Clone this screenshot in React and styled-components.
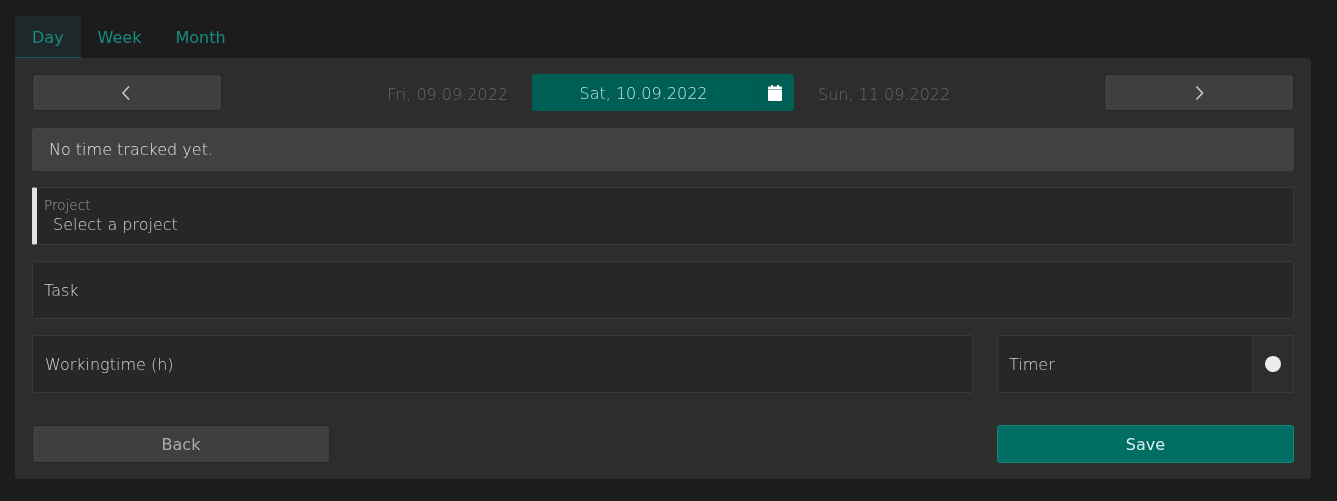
import React from "react";
import styled, { createGlobalStyle } from "styled-components";

const GlobalStyle = createGlobalStyle`
  html, body {
    margin: 0;
    background: #1c1c1c;
    font-family: "DejaVu Sans", sans-serif;
    font-size: 16px;
  }
`;

const Page = styled.div`
  padding: 16px 26px 22px 15px;
  width: 1337px;
  height: 501px;
  box-sizing: border-box;
  will-change: transform;
`;

const Tabs = styled.div`
  display: flex;
  height: 42px;
`;

const Tab = styled.div`
  padding: 0 17px;
  line-height: 43px;
  color: #148c80;
  background: ${(p) => (p.$active ? "#20272a" : "transparent")};
  border-bottom: ${(p) => (p.$active ? "1px solid #0c5f56" : "none")};
  box-sizing: border-box;
`;

const Panel = styled.div`
  background: #2d2d2d;
  border-radius: 0 3px 3px 3px;
  padding: 16px 17px;
  height: 421px;
  box-sizing: border-box;
  display: flex;
  flex-direction: column;
`;

const DateRow = styled.div`
  display: flex;
  align-items: center;
  justify-content: space-between;
  height: 37px;
`;

const NavButton = styled.div`
  width: 190px;
  height: 37px;
  box-sizing: border-box;
  padding-top: 1px;
  background: #3f3f3f;
  border: 1px solid #262626;
  border-radius: 3px;
  display: flex;
  align-items: center;
  justify-content: center;
`;

const DateGroup = styled.div`
  display: flex;
  align-items: center;
  gap: 24px;
`;

const DateText = styled.div`
  color: #686868;
  font-weight: 300;
  width: 132px;
  white-space: nowrap;
  padding-top: 3px;
  text-align: ${(p) => p.$align};
`;

const DatePicker = styled.div`
  display: flex;
  width: 262px;
  height: 37px;
  background: #005f55;
  border-radius: 3px;
`;

const DateValue = styled.div`
  flex: 1;
  padding-left: 1px;
  text-align: center;
  line-height: 39px;
  font-weight: 300;
  color: #c4e4df;
  border-right: 1px solid #0a5249;
`;

const CalendarBox = styled.div`
  width: 39px;
  display: flex;
  align-items: center;
  justify-content: center;
`;

const Notice = styled.div`
  margin-top: 17px;
  height: 43px;
  line-height: 43px;
  background: #414141;
  border-radius: 3px;
  padding: 0 17px;
  font-weight: 300;
  color: #e2e2e2;
`;

const Field = styled.div`
  margin-top: 16px;
  height: 58px;
  box-sizing: border-box;
  background: #272727;
  border: 1px solid #3a3a3a;
  border-radius: 2px;
  font-weight: 300;
  color: #d4d4d4;
  display: flex;
  flex-direction: column;
  justify-content: center;
  flex: ${(p) => (p.$grow ? 1 : "none")};
  border-left: ${(p) => (p.$marked ? "5px solid #e4e4e4" : "1px solid #3a3a3a")};
  padding: 0 0 0 ${(p) => p.$inset || 11}px;
`;

const FieldLabel = styled.div`
  font-size: 13.6px;
  line-height: 16px;
  color: #a0a0a0;
`;

const SelectValue = styled.div`
  padding: 1px 0 0 9px;
  line-height: 22px;
  color: #d4d4d4;
`;

const WorkRow = styled.div`
  display: flex;
  gap: 24px;
`;

const TimerBox = styled.div`
  margin-top: 16px;
  width: 297px;
  height: 58px;
  box-sizing: border-box;
  border: 1px solid #3a3a3a;
  border-radius: 2px;
  display: flex;
`;

const TimerLabel = styled.div`
  flex: 1;
  background: #272727;
  font-weight: 300;
  color: #d4d4d4;
  line-height: 57px;
  padding-left: 11px;
  border-right: 1px solid #3a3a3a;
`;

const TimerToggle = styled.div`
  width: 40px;
  display: flex;
  align-items: center;
  justify-content: center;
`;

const Dot = styled.div`
  width: 16px;
  height: 16px;
  border-radius: 50%;
  background: #ececec;
`;

const Actions = styled.div`
  margin-top: 32px;
  display: flex;
  justify-content: space-between;
`;

const ActionButton = styled.div`
  width: ${(p) => (p.$primary ? 297 : 298)}px;
  height: 38px;
  box-sizing: border-box;
  border-radius: 3px;
  line-height: 37px;
  text-align: center;
  background: ${(p) => (p.$primary ? "#006e62" : "#3f3f3f")};
  border: 1px solid ${(p) => (p.$primary ? "#12897b" : "#262626")};
  color: ${(p) => (p.$primary ? "#d7efeb" : "#acacac")};
`;

const Chevron = ({ points }) => (
  <svg width="12" height="16" viewBox="0 0 12 16" fill="none">
    <polyline points={points} stroke="#c8c8c8" strokeWidth="1.6" />
  </svg>
);

const CalendarIcon = () => (
  <svg width="14" height="16" viewBox="0 0 14 16" fill="#fff">
    <rect x="3" y="0" width="2" height="3" />
    <rect x="9" y="0" width="2" height="3" />
    <path d="M1.2 1.6H13a1 1 0 0 1 1 1V4.6H0V2.8a1.2 1.2 0 0 1 1.2-1.2z" />
    <path d="M0 5h14v9.8a1.2 1.2 0 0 1-1.2 1.2H1.2A1.2 1.2 0 0 1 0 14.8z" />
  </svg>
);

export default function App() {
  return (
    <Page>
      <GlobalStyle />
      <Tabs>
        <Tab $active>Day</Tab>
        <Tab>Week</Tab>
        <Tab>Month</Tab>
      </Tabs>
      <Panel>
        <DateRow>
          <NavButton>
            <Chevron points="8,1.5 2,8 8,14.5" />
          </NavButton>
          <DateGroup>
            <DateText $align="right">Fri, 09.09.2022</DateText>
            <DatePicker>
              <DateValue>Sat, 10.09.2022</DateValue>
              <CalendarBox>
                <CalendarIcon />
              </CalendarBox>
            </DatePicker>
            <DateText $align="left">Sun, 11.09.2022</DateText>
          </DateGroup>
          <NavButton>
            <Chevron points="3.5,1.5 9.5,8 3.5,14.5" />
          </NavButton>
        </DateRow>
        <Notice>No time tracked yet.</Notice>
        <Field $marked $inset={7}>
          <FieldLabel>Project</FieldLabel>
          <SelectValue>Select a project</SelectValue>
        </Field>
        <Field>Task</Field>
        <WorkRow>
          <Field $grow $inset={12}>Workingtime (h)</Field>
          <TimerBox>
            <TimerLabel>Timer</TimerLabel>
            <TimerToggle>
              <Dot />
            </TimerToggle>
          </TimerBox>
        </WorkRow>
        <Actions>
          <ActionButton>Back</ActionButton>
          <ActionButton $primary>Save</ActionButton>
        </Actions>
      </Panel>
    </Page>
  );
}
